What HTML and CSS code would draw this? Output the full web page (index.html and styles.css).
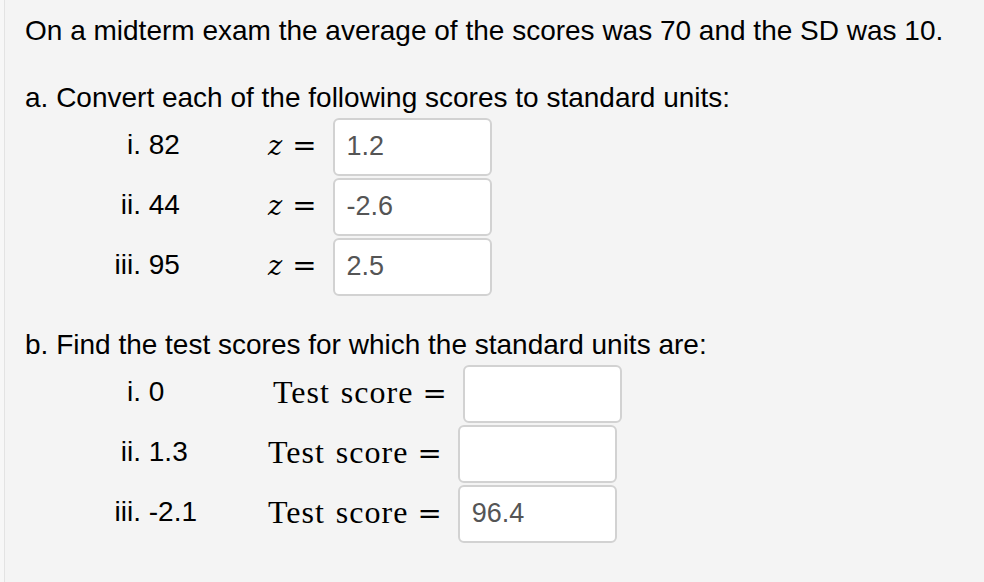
FILE: index.html
```html
<!DOCTYPE html>
<html lang="en">
<head>
<meta charset="utf-8">
<title>Standard units</title>
<link rel="stylesheet" href="styles.css">
</head>
<body>
<div class="panel">
  <p class="intro">On a midterm exam the average of the scores was 70 and the SD was 10.</p>

  <p class="part-head part-a">a. Convert each of the following scores to standard units:</p>
  <div class="rows">
    <div class="row">
      <div class="label"><span class="num">i.</span> 82</div>
      <div class="math"><span class="var">z</span><span class="eq">=</span></div>
      <div class="answer">1.2</div>
    </div>
    <div class="row">
      <div class="label"><span class="num">ii.</span> 44</div>
      <div class="math"><span class="var">z</span><span class="eq">=</span></div>
      <div class="answer">-2.6</div>
    </div>
    <div class="row">
      <div class="label"><span class="num">iii.</span> 95</div>
      <div class="math"><span class="var">z</span><span class="eq">=</span></div>
      <div class="answer">2.5</div>
    </div>
  </div>

  <p class="part-head part-b">b. Find the test scores for which the standard units are:</p>
  <div class="rows">
    <div class="row">
      <div class="label"><span class="num">i.</span> 0</div>
      <div class="math shifted"><span class="word">Test score</span><span class="eq">=</span></div>
      <div class="answer"></div>
    </div>
    <div class="row">
      <div class="label"><span class="num">ii.</span> 1.3</div>
      <div class="math"><span class="word">Test score</span><span class="eq">=</span></div>
      <div class="answer"></div>
    </div>
    <div class="row">
      <div class="label"><span class="num">iii.</span> -2.1</div>
      <div class="math"><span class="word">Test score</span><span class="eq">=</span></div>
      <div class="answer">96.4</div>
    </div>
  </div>
</div>
</body>
</html>
```

FILE: styles.css
```css
html, body {
  margin: 0;
  padding: 0;
}

body {
  background: #f7f7f7;
  font-family: "Liberation Sans", Arial, Helvetica, sans-serif;
  color: #000;
}

.panel {
  margin-left: 4px;
  border-left: 1px solid #e3e3e3;
  background: #f4f4f4;
  min-height: 582px;
  box-sizing: border-box;
  padding: 15px 0 0 20px;
}

p {
  margin: 0;
}

.intro,
.part-head {
  font-size: 28px;
  line-height: 32px;
}

.part-a {
  margin-top: 35px;
}

.part-b {
  margin-top: 33px;
}

.rows {
  display: flex;
  flex-direction: column;
  gap: 2px;
  margin-top: 4px;
}

.row {
  display: flex;
  align-items: center;
  height: 58px;
}

.label {
  box-sizing: border-box;
  width: 243px;
  padding-left: 73px;
  padding-bottom: 4px;
  font-size: 28px;
  line-height: 32px;
  white-space: nowrap;
}

.num {
  display: inline-block;
  width: 43px;
  text-align: right;
}

.math {
  display: flex;
  align-items: baseline;
  font-family: "Liberation Serif", "Times New Roman", serif;
  font-size: 32px;
  line-height: 34px;
  padding-bottom: 4px;
  white-space: nowrap;
}

.math.shifted {
  margin-left: 5px;
}

.var {
  font-family: "DejaVu Serif", serif;
  font-style: italic;
  font-size: 27px;
  margin-right: 10px;
}

.word {
  letter-spacing: 1px;
  word-spacing: 2px;
  margin-right: 9px;
}

.eq {
  font-family: "DejaVu Sans", sans-serif;
  font-size: 29px;
  margin-right: 16px;
}

.answer {
  box-sizing: border-box;
  width: 159px;
  height: 58px;
  border: 2px solid #d2d2d2;
  border-radius: 6px;
  background: #fff;
  padding: 0 0 2px 12px;
  display: flex;
  align-items: center;
  font-size: 27px;
  color: #555;
}
```
